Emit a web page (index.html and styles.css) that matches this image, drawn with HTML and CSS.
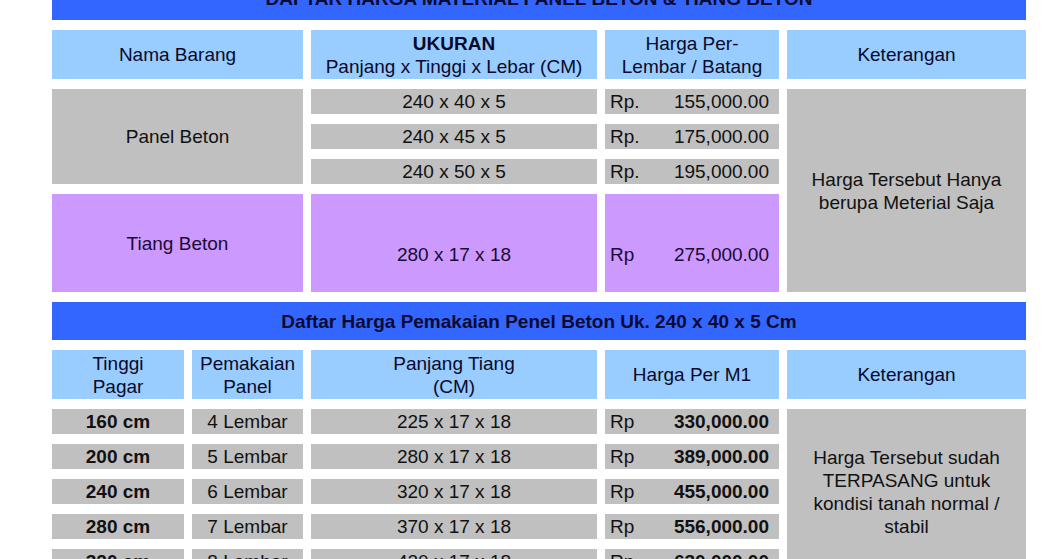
FILE: index.html
```html
<!DOCTYPE html>
<html lang="id">
<head>
<meta charset="utf-8">
<title>Daftar Harga Panel Beton</title>
<link rel="stylesheet" href="styles.css">
</head>
<body>
<div class="sheet">
  <div class="banner full first">DAFTAR HARGA MATERIAL PANEL BETON &amp; TIANG BETON</div>

  <div class="hd span2">Nama Barang</div>
  <div class="hd"><div><b>UKURAN</b><br>Panjang x Tinggi x Lebar (CM)</div></div>
  <div class="hd"><div>Harga Per-<br>Lembar / Batang</div></div>
  <div class="hd">Keterangan</div>

  <div class="gr span2 rows3">Panel Beton</div>
  <div class="gr">240 x 40 x 5</div>
  <div class="gr price"><span>Rp.</span><span>155,000.00</span></div>
  <div class="gr rows4 note"><div>Harga Tersebut Hanya<br>berupa Meterial Saja</div></div>

  <div class="gr">240 x 45 x 5</div>
  <div class="gr price"><span>Rp.</span><span>175,000.00</span></div>

  <div class="gr">240 x 50 x 5</div>
  <div class="gr price"><span>Rp.</span><span>195,000.00</span></div>

  <div class="pu span2">Tiang Beton</div>
  <div class="pu low">280 x 17 x 18</div>
  <div class="pu price low"><span>Rp</span><span>275,000.00</span></div>

  <div class="banner full">Daftar Harga Pemakaian Penel Beton Uk. 240 x 40 x 5 Cm</div>

  <div class="hd"><div>Tinggi<br>Pagar</div></div>
  <div class="hd"><div>Pemakaian<br>Panel</div></div>
  <div class="hd"><div>Panjang Tiang<br>(CM)</div></div>
  <div class="hd">Harga Per M1</div>
  <div class="hd">Keterangan</div>

  <div class="gr bold">160 cm</div>
  <div class="gr">4 Lembar</div>
  <div class="gr">225 x 17 x 18</div>
  <div class="gr price"><span>Rp</span><span class="bold">330,000.00</span></div>
  <div class="gr rows5 note"><div>Harga Tersebut sudah<br>TERPASANG untuk<br>kondisi tanah normal /<br>stabil</div></div>

  <div class="gr bold">200 cm</div>
  <div class="gr">5 Lembar</div>
  <div class="gr">280 x 17 x 18</div>
  <div class="gr price"><span>Rp</span><span class="bold">389,000.00</span></div>

  <div class="gr bold">240 cm</div>
  <div class="gr">6 Lembar</div>
  <div class="gr">320 x 17 x 18</div>
  <div class="gr price"><span>Rp</span><span class="bold">455,000.00</span></div>

  <div class="gr bold">280 cm</div>
  <div class="gr">7 Lembar</div>
  <div class="gr">370 x 17 x 18</div>
  <div class="gr price"><span>Rp</span><span class="bold">556,000.00</span></div>

  <div class="gr bold">320 cm</div>
  <div class="gr">8 Lembar</div>
  <div class="gr">420 x 17 x 18</div>
  <div class="gr price"><span>Rp</span><span class="bold">630,000.00</span></div>
</div>
</body>
</html>
```

FILE: styles.css
```css
html, body {
  margin: 0;
  padding: 0;
  background: #ffffff;
}

body {
  font-family: "Liberation Sans", Arial, sans-serif;
  font-size: 19px;
  color: #111111;
}

.sheet {
  display: grid;
  grid-template-columns: 132px 111px 286px 174px 239px;
  grid-template-rows: 40px 49px 25px 25px 25px 98px 38px 49px 25px 25px 25px 25px 25px;
  grid-auto-rows: 25px;
  column-gap: 8px;
  row-gap: 10px;
  width: 974px;
  margin: -20px 0 0 52px;
}

.sheet > div {
  display: flex;
  align-items: center;
  justify-content: center;
  text-align: center;
  line-height: 23px;
  white-space: nowrap;
}

.full { grid-column: 1 / -1; }
.span2 { grid-column: span 2; }
.rows3 { grid-row: span 3; }
.rows4 { grid-row: span 4; }
.rows5 { grid-row: span 5; }

.banner {
  background: #3366ff;
  color: #0a0a33;
  font-weight: bold;
  line-height: 22px;
}

.banner.first {
  padding-bottom: 3px;
  box-sizing: border-box;
}

.hd {
  background: #99ccff;
  color: #0a0a2a;
}

.gr {
  background: #c0c0c0;
  color: #111111;
}

.pu {
  background: #cc99ff;
  color: #1a0a33;
}

.low {
  padding-top: 23px;
  box-sizing: border-box;
}

.sheet > .price {
  justify-content: space-between;
  padding-left: 5px;
  padding-right: 10px;
}

.bold {
  font-weight: bold;
}
```
